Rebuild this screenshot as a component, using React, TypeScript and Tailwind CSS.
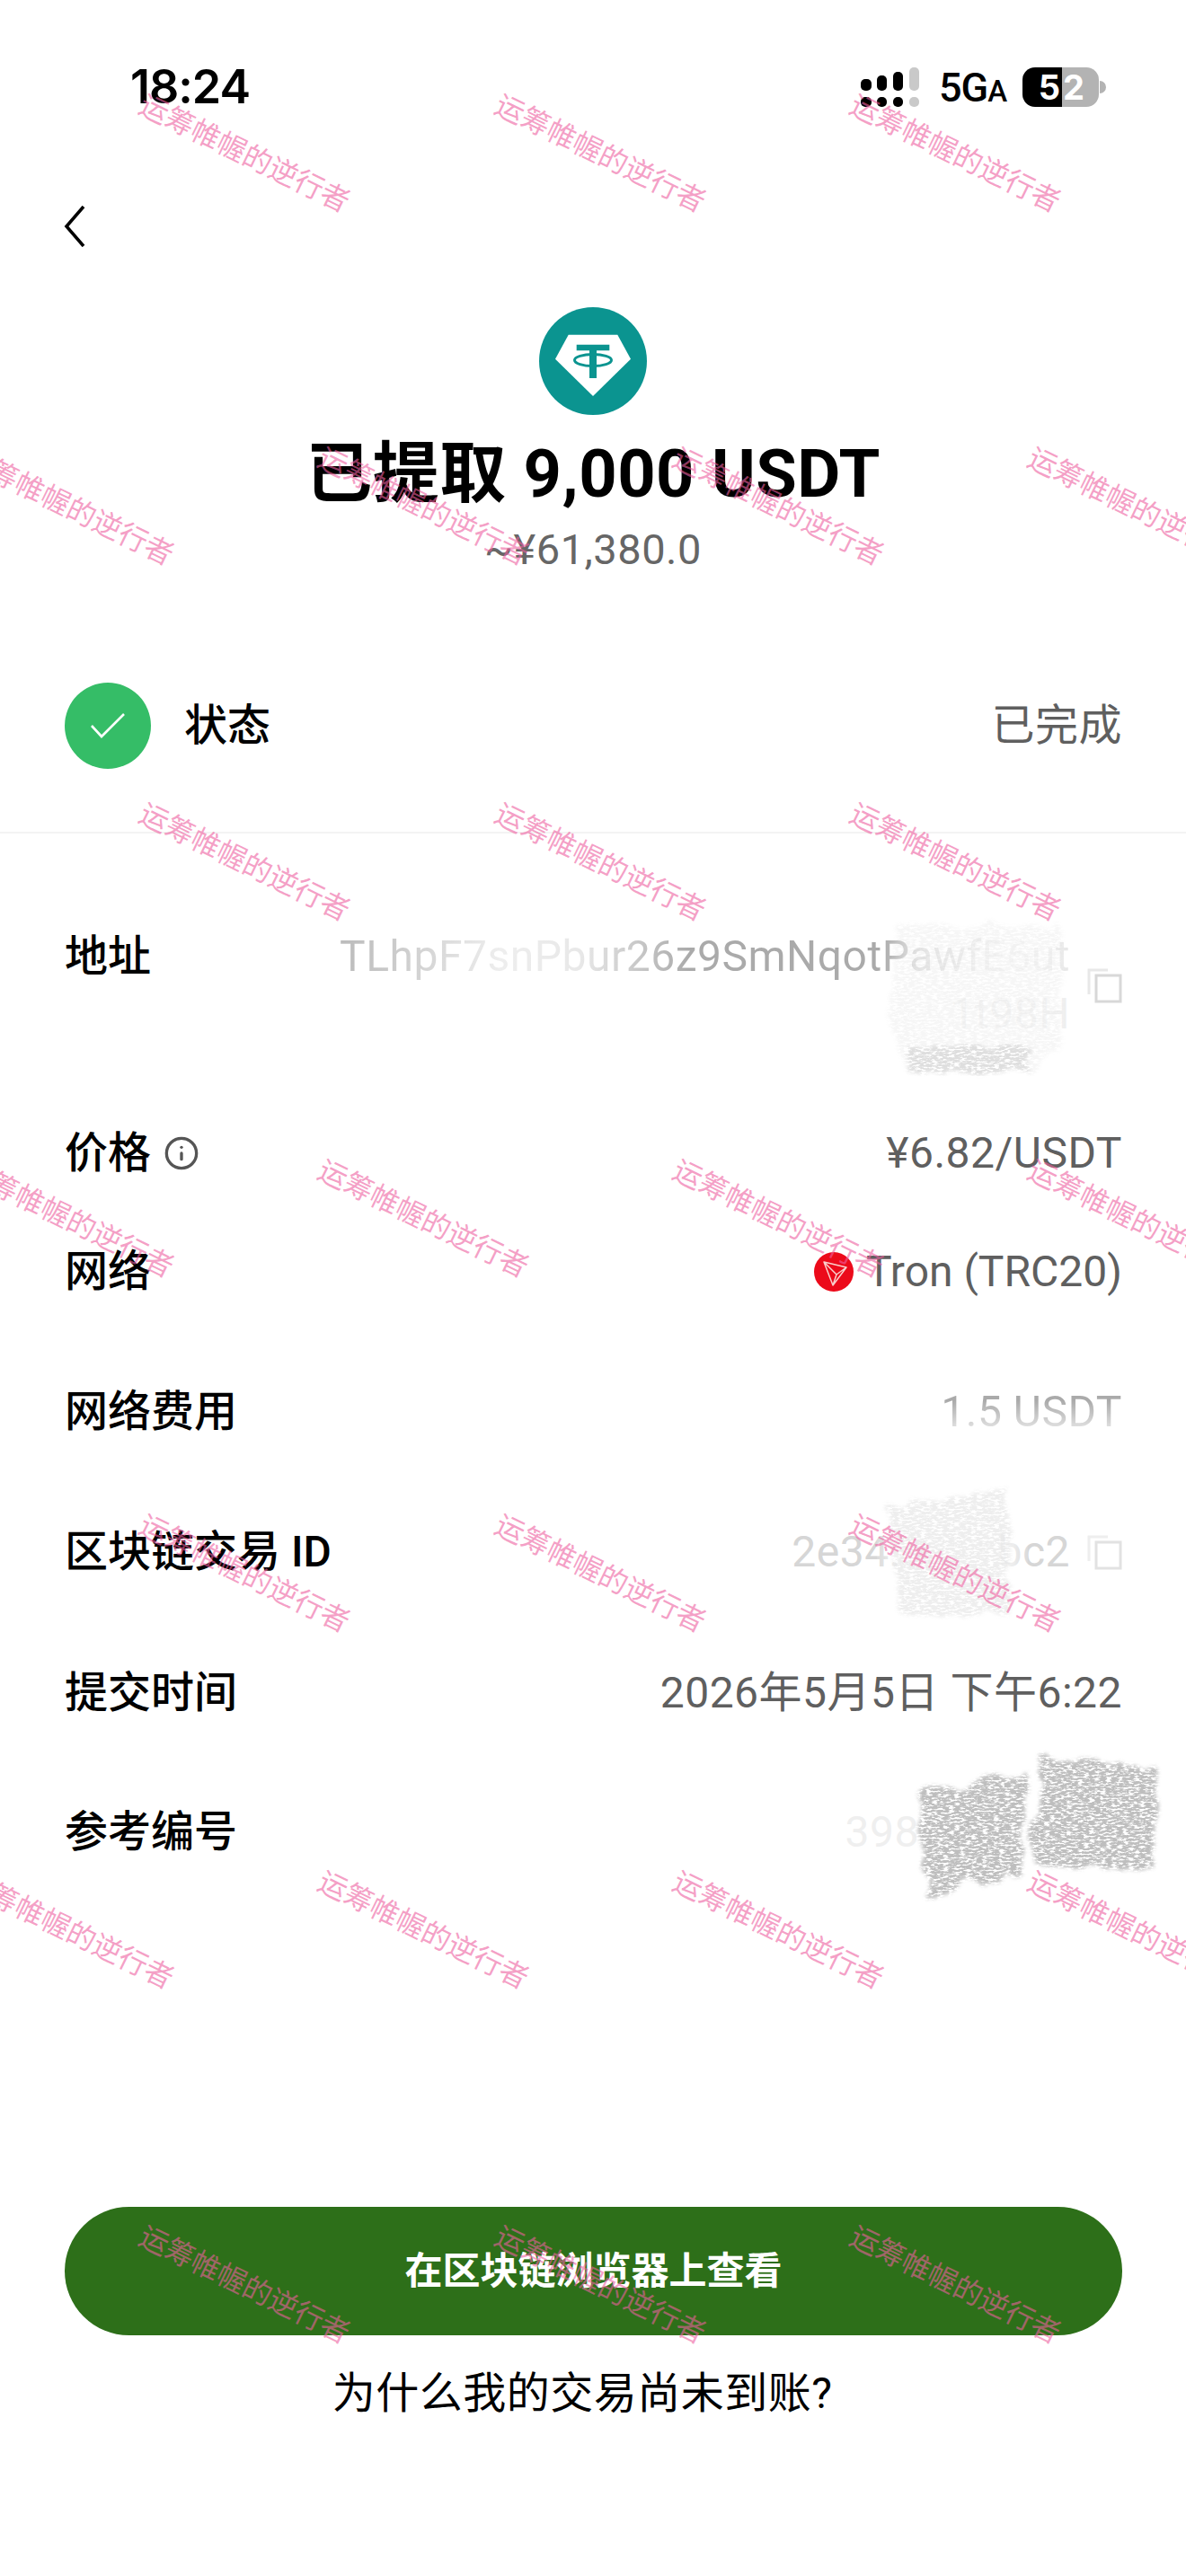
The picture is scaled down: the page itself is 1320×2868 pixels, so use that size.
import React from 'react';
import { Info } from 'lucide-react';

const marks: [number, number][] = [
  [272, 171], [668, 171], [1063, 171],
  [76, 564], [471, 564], [866, 564], [1261, 564],
  [272, 960], [668, 960], [1063, 960],
  [76, 1357], [471, 1357], [866, 1357], [1261, 1357],
  [272, 1752], [668, 1752], [1063, 1752],
  [76, 2149], [471, 2149], [866, 2149], [1261, 2149],
  [272, 2544], [668, 2544], [1063, 2544],
];

const Watermark = ({ x, y }: { x: number; y: number }) => (
  <div
    className="absolute whitespace-nowrap text-[32px] leading-none text-[#ee5f9f]/60 pointer-events-none"
    style={{ left: x, top: y, transform: 'translate(-50%, -50%) rotate(26deg)' }}
  >
    运筹帷幄的逆行者
  </div>
);

const Scribbles = () => (
  <svg className="absolute left-0 top-0 pointer-events-none" width="1320" height="2868">
    <defs>
      <filter id="scratch" x="-10%" y="-10%" width="120%" height="120%">
        <feTurbulence type="fractalNoise" baseFrequency="0.035" numOctaves="2" seed="3" result="warp" />
        <feDisplacementMap in="SourceGraphic" in2="warp" scale="22" result="rough" />
        <feGaussianBlur in="rough" stdDeviation="2" result="edge" />
        <feTurbulence type="fractalNoise" baseFrequency="0.16 0.5" numOctaves="3" seed="7" result="n" />
        <feColorMatrix in="n" type="matrix" values="0 0 0 0 0.45  0 0 0 0 0.45  0 0 0 0 0.45  0 0 0 5 -1.7" result="g" />
        <feGaussianBlur in="g" stdDeviation="0.6" result="gs" />
        <feComposite in="gs" in2="edge" operator="in" />
      </filter>
      <filter id="soft"><feGaussianBlur stdDeviation="12" /></filter>
    </defs>
    {/* white wash over the hidden parts of the values */}
    <path d="M1000 1030h185v170h-185z" fill="#fff" filter="url(#soft)" opacity="0.7" />
    <path d="M990 1650h140v155h-140z" fill="#fff" filter="url(#soft)" />
    <path d="M1020 2000h240v70h-240z" fill="#fff" />
    {/* address */}
    <g filter="url(#scratch)" opacity="0.1">
      <path d="M995 1030h185v130l-30 35h-140l-20-50z" fill="#000" />
    </g>
    <g filter="url(#scratch)" opacity="0.35">
      <path d="M1012 1165h135v30h-135z" fill="#000" />
    </g>
    {/* chain id */}
    <g filter="url(#scratch)" opacity="0.22">
      <path d="M990 1678l105-20h28v140h-120l-10-60z" fill="#000" />
    </g>
    {/* reference */}
    <g filter="url(#scratch)" opacity="0.85">
      <path d="M1018 1995l125-22-6 112-40 8-66 22-6-70z" fill="#000" />
      <path d="M1160 1958l128 10-4 105-2 8h-40l-90-6-4-48 12-10z" fill="#000" />
    </g>
  </svg>
);

const TetherIcon = () => (
  <svg viewBox="0 0 120 120" className="w-[120px] h-[120px]">
    <circle cx="60" cy="60" r="60" fill="#0b9490" />
    <path d="M32.7 30.7h54.6L102 57.7 60 99 18 57.7z" fill="#fff" />
    <path d="M41.7 41.7h36.6v6.6H64V79h-8V48.3H41.7z" fill="#0b9490" />
    <ellipse cx="60" cy="59" rx="20.5" ry="6.5" fill="none" stroke="#0b9490" strokeWidth="3" />
  </svg>
);

const TronIcon = () => (
  <svg viewBox="0 0 44 44" className="w-[44px] h-[44px] shrink-0">
    <circle cx="22" cy="22" r="22" fill="#ec0a1a" />
    <path d="M11 11l25 6-15 20zM11 11l14 14 11-8M25 25l-4 12" fill="none" stroke="#f9d0cc" strokeWidth="1.5" strokeLinejoin="round" />
  </svg>
);

const CopyIcon = ({ className }: { className: string }) => (
  <svg viewBox="0 0 40 40" className={className} fill="none" stroke="currentColor" strokeWidth="3">
    <path d="M3 30V3h21" strokeOpacity="0.6" />
    <rect x="11" y="9" width="27" height="29" />
  </svg>
);

const StatusBar = () => (
  <div className="h-[130px] pt-[64px] pl-[145px] pr-[89px] flex justify-between items-start shrink-0">
    <span className="h-[66px] flex items-center font-['Inter',sans-serif] font-semibold text-[52px] leading-none tracking-[-1px] text-black">18:24</span>
    <div className="h-[66px] flex items-center">
      <svg viewBox="0 0 66 44" className="w-[66px] h-[44px] mr-[21px]">
        <rect x="0" y="13" width="12" height="13" rx="5" fill="#000" />
        <rect x="18" y="9" width="11" height="17" rx="5" fill="#000" />
        <rect x="36" y="5" width="11" height="21" rx="5" fill="#000" />
        <rect x="54" y="0" width="11" height="26" rx="5" fill="#c9c9c9" />
        <rect x="0" y="33" width="12" height="11" rx="5" fill="#000" />
        <rect x="18" y="33" width="11" height="11" rx="5" fill="#000" />
        <rect x="36" y="33" width="11" height="11" rx="5" fill="#000" />
        <rect x="54" y="33" width="11" height="11" rx="5" fill="#c9c9c9" />
      </svg>
      <span className="w-[73px] mr-[20px] flex items-baseline font-['Roboto',sans-serif] font-medium text-[45px] leading-none text-black tracking-[-1px]">
        5G<span className="text-[33px]">A</span>
      </span>
      <div className="flex items-center">
        <div className="w-[85px] h-[44px] rounded-[14px] overflow-hidden flex font-['Inter',sans-serif] font-bold text-[38px] leading-[44px] text-white">
          <span className="w-[44px] bg-black text-right pr-[2px]">5</span>
          <span className="flex-1 bg-[#b3b3b3] pl-[1px]">2</span>
        </div>
        <div className="w-[7px] h-[14px] ml-[1px] rounded-r-full bg-[#b3b3b3]" />
      </div>
    </div>
  </div>
);

const labelClass = "text-[48px] leading-[64px] text-black font-medium whitespace-nowrap";
const valueBase = "text-[48px] leading-[64px] whitespace-nowrap";
const valueClass = `${valueBase} tracking-[0.5px]`;

const Row = ({ label, className, children }: { label: React.ReactNode; className: string; children: React.ReactNode }) => (
  <div className={`flex justify-between items-start h-[64px] shrink-0 ${className}`}>
    <div className={`${labelClass} flex items-center`}>{label}</div>
    {children}
  </div>
);

export default function App() {
  return (
    <div className="relative w-[1320px] h-[2868px] overflow-hidden bg-white flex flex-col font-['Roboto','Noto_Sans_CJK_SC',sans-serif]">
      <StatusBar />

      <svg viewBox="0 0 24 46" className="w-[24px] h-[46px] ml-[71px] mt-[99px] shrink-0" fill="none" stroke="#000" strokeWidth="3.6">
        <path d="M22 1L3 23l19 22" />
      </svg>

      <div className="flex flex-col items-center shrink-0">
        <div className="mt-[67px]"><TetherIcon /></div>
        <div className="mt-[16px] text-[74px] leading-[100px] tracking-[0.5px] font-bold text-black whitespace-nowrap">已提取 9,000 USDT</div>
        <div className="mt-[4px] text-[47px] leading-[60px] tracking-[0.5px] text-[#666666]">~¥61,380.0</div>
      </div>

      <div className="mt-[118px] pl-[72px] pr-[71px] flex items-center justify-between shrink-0">
        <div className="flex items-center gap-[37px]">
          <div className="w-[96px] h-[96px] rounded-full bg-[#35bd67] flex items-center justify-center">
            <svg viewBox="0 0 38 28" className="w-[38px] h-[28px]" fill="none" stroke="#fff" strokeWidth="2.6">
              <path d="M1 14l11 12L37 1" />
            </svg>
          </div>
          <span className={labelClass}>状态</span>
        </div>
        <span className={`${valueClass} text-[#5f5f5f]`}>已完成</span>
      </div>

      <div className="mt-[70px] h-[2px] bg-[#f3f3f3] shrink-0" />

      <div className="mt-[105px] pl-[72px] pr-[71px] flex justify-between items-start h-[128px] shrink-0">
        <span className={labelClass}>地址</span>
        <div className="flex items-start">
          <div className="flex flex-col items-end">
            <span className={`${valueClass} text-transparent bg-clip-text bg-[linear-gradient(90deg,#bbb_0%,#ccc_8%,#eee_22%,#e8e8e8_33%,#aaa_48%,#aaa_78%,#ddd_88%,#eee_92%,#ddd_100%)]`}>TLhpF7snPbur26z9SmNqotPawfE6ut</span>
            <span className={`${valueClass} text-[#e6e6e6]`}>1t98H</span>
          </div>
          <CopyIcon className="w-[40px] h-[40px] ml-[18px] mt-[44px] text-[#d8d8d8]" />
        </div>
      </div>

      <Row label={<>价格<Info className="w-[40px] h-[40px] ml-[14px] text-[#555555]" strokeWidth={2} /></>} className="mt-[91px] pl-[72px] pr-[71px]">
        <span className={`${valueClass} text-[#5f5f5f]`}>¥6.82/USDT</span>
      </Row>

      <Row label="网络" className="mt-[68px] pl-[72px] pr-[71px]">
        <div className="flex items-center h-[64px]">
          <TronIcon />
          <span className={`${valueBase} text-[#5f5f5f] ml-[14px]`}>Tron (TRC20)</span>
        </div>
      </Row>

      <Row label="网络费用" className="mt-[92px] pl-[72px] pr-[71px]">
        <span className={`${valueClass} text-transparent bg-clip-text bg-[linear-gradient(180deg,#aaa_30%,#ddd_75%)]`}>1.5 USDT</span>
      </Row>

      <Row label="区块链交易 ID" className="mt-[92px] pl-[72px] pr-[71px]">
        <div className="flex items-center h-[64px]">
          <span className={`${valueClass} text-[#d6d6d6]`}>2e34.....d1bc2</span>
          <CopyIcon className="w-[40px] h-[40px] ml-[18px] text-[#e2e2e2]" />
        </div>
      </Row>

      <Row label="提交时间" className="mt-[93px] pl-[72px] pr-[71px]">
        <span className={`${valueClass} text-[#5f5f5f]`}>2026年5月5日 下午6:22</span>
      </Row>

      <Row label="参考编号" className="mt-[91px] pl-[72px] pr-[71px]">
        <span className={`${valueClass} text-[#efefef] pr-[226px]`}>398</span>
      </Row>

      <div className="mt-[385px] ml-[72px] mr-[71px] h-[143px] rounded-[72px] bg-[#2d6f19] flex items-center justify-center shrink-0">
        <span className="text-[42px] leading-none font-semibold text-white">在区块链浏览器上查看</span>
      </div>

      <div className="mt-[33px] h-[64px] pr-[24px] flex items-center justify-center text-[48px] leading-[64px] tracking-[0.5px] text-black">为什么我的交易尚未到账?</div>

      <Scribbles />
      {marks.map(([x, y], i) => (
        <Watermark key={i} x={x} y={y} />
      ))}
    </div>
  );
}
